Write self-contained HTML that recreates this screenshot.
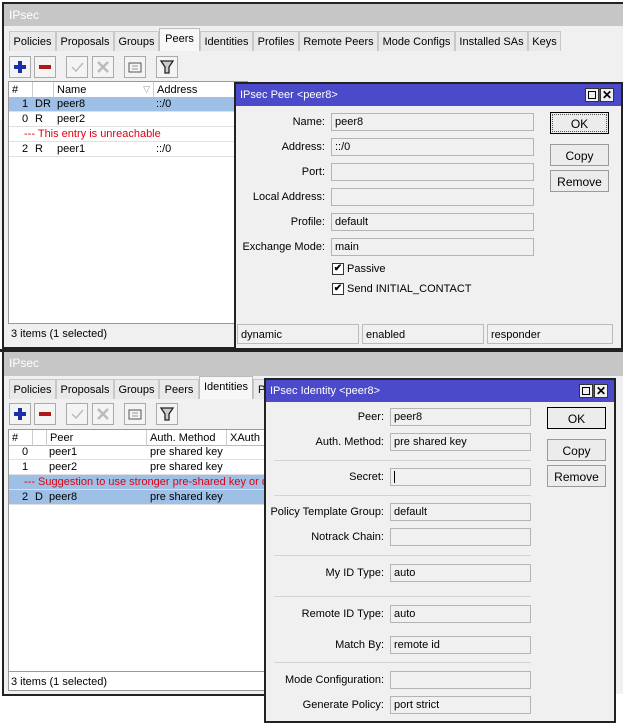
<!DOCTYPE html>
<html><head><meta charset="utf-8"><style>
*{box-sizing:border-box;margin:0;padding:0}
body{width:623px;height:719px;overflow:hidden;background:#fff;position:relative;font-family:"Liberation Sans",sans-serif;font-size:11px;color:#000}
.a{position:absolute}
.win{position:absolute;background:#f0f0f0;border:2px solid #222}
.tb{position:absolute;background:#c6c6c6;color:#fff;font-size:12px;padding:4px 0 0 5px}
.tab{position:absolute;height:20px;background:#e9e9e9;border:1px solid #c8c8c8;border-bottom:none;padding:4px 0 0 0;text-align:center;font-size:11px}
.tab.on{background:#f7f7f7;height:23px;border-color:#bbb}
.btn{position:absolute;width:22px;height:22px;border:1px solid #aaa;background:#f4f4f4}
.tbl{position:absolute;background:#fff;border:1px solid #999}
.hd{position:absolute;height:16px;background:#fff;border-right:1px solid #ccc;border-bottom:1px solid #bbb;padding:2px 3px}
.row{position:absolute;height:15px;border-bottom:1px solid #e0e0e0;white-space:nowrap}
.c{position:absolute;top:1px}
.sel{background:#9ec0e6}
.red{color:#e00010}
.dlg{position:absolute;background:#f0f0f0;border:2px solid #222}
.dt{position:absolute;left:0;right:0;top:0;height:22px;background:#4a4acb;color:#fff;font-size:11px;padding:5px 0 0 4px}
.wb{position:absolute;top:4px;width:14px;height:14px;background:#f0f0f0;border:1px solid #333}
.lb{position:absolute;text-align:right;width:200px}
.in{position:absolute;height:18px;background:#f0f0f0;border:1px solid #b4b4b4;padding:2px 3px}
.bt{position:absolute;width:59px;height:22px;border:1px solid #9a9a9a;background:#ececec;text-align:center;padding-top:4px;font-size:12px}
.sep{position:absolute;height:1px;background:#d4d4d4}
.cb{position:absolute;width:12px;height:12px;border:1px solid #333;background:#fff;font-size:10px;line-height:10px;text-align:center;font-weight:bold}
.st{position:absolute;height:20px;border:1px solid #bbb;padding:4px 3px;background:#f0f0f0}
</style></head><body>

<div class="a" style="left:0;top:120px;width:3px;height:120px;background:#f0f0f0"></div>

<!-- TOP WINDOW -->
<div class="win" style="left:2px;top:2px;width:640px;height:347px"></div>
<div class="tb" style="left:4px;top:4px;width:619px;height:22px">IPsec</div>
<div class="a" style="left:4px;top:26px;width:619px;height:320px;background:#f0f0f0"></div>
<div class="tab" style="left:9px;top:31px;width:47px">Policies</div>
<div class="tab" style="left:56px;top:31px;width:58px">Proposals</div>
<div class="tab" style="left:114px;top:31px;width:45px">Groups</div>
<div class="tab on" style="left:159px;top:28px;width:41px">Peers</div>
<div class="tab" style="left:200px;top:31px;width:53px">Identities</div>
<div class="tab" style="left:253px;top:31px;width:46px">Profiles</div>
<div class="tab" style="left:299px;top:31px;width:79px">Remote Peers</div>
<div class="tab" style="left:378px;top:31px;width:77px">Mode Configs</div>
<div class="tab" style="left:455px;top:31px;width:73px">Installed SAs</div>
<div class="tab" style="left:528px;top:31px;width:33px">Keys</div>

<div class="btn" style="left:9px;top:56px"><svg width="20" height="20"><path d="M10 4v12M4 10h12" stroke="#1a2fa8" stroke-width="4"/></svg></div>
<div class="btn" style="left:34px;top:56px"><svg width="20" height="20"><path d="M4 10h12" stroke="#b01818" stroke-width="4"/></svg></div>
<div class="btn" style="left:66px;top:56px"><svg width="20" height="20"><path d="M5 10l4 4 7-8" stroke="#bbb" fill="none" stroke-width="1.5"/></svg></div>
<div class="btn" style="left:92px;top:56px"><svg width="20" height="20"><path d="M5 5l10 10M15 5L5 15" stroke="#bbb" stroke-width="2.5"/></svg></div>
<div class="btn" style="left:124px;top:56px"><svg width="20" height="20"><rect x="4" y="6" width="12" height="9" fill="none" stroke="#555"/><path d="M7 9h6M7 12h6" stroke="#999"/></svg></div>
<div class="btn" style="left:156px;top:56px"><svg width="20" height="20"><path d="M4 4h12l-4 6v6h-4v-6z" fill="#ccc" stroke="#222" stroke-width="1.3"/></svg></div>

<div class="tbl" style="left:8px;top:81px;width:240px;height:243px"></div>
<div class="hd" style="left:9px;top:82px;width:24px">#</div>
<div class="hd" style="left:33px;top:82px;width:21px"></div>
<div class="hd" style="left:54px;top:82px;width:100px">Name<span style="position:absolute;right:3px;color:#999;font-size:9px">▽</span></div>
<div class="hd" style="left:154px;top:82px;width:100px">Address</div>
<div class="row sel" style="left:9px;top:97px;width:226px"><span class="c" style="left:13px">1</span><span class="c" style="left:26px">DR</span><span class="c" style="left:48px">peer8</span><span class="c" style="left:147px">::/0</span></div>
<div class="row" style="left:9px;top:112px;width:226px"><span class="c" style="left:13px">0</span><span class="c" style="left:26px">R</span><span class="c" style="left:48px">peer2</span></div>
<div class="row red" style="left:9px;top:127px;width:226px"><span class="c" style="left:15px">--- This entry is unreachable</span></div>
<div class="row" style="left:9px;top:142px;width:226px"><span class="c" style="left:13px">2</span><span class="c" style="left:26px">R</span><span class="c" style="left:48px">peer1</span><span class="c" style="left:147px">::/0</span></div>
<div class="a" style="left:8px;top:323px;width:228px;height:20px;border-top:1px solid #999;padding:4px 3px">3 items (1 selected)</div>
<div class="a" style="left:620px;top:322px;width:3px;height:22px;border-left:1px solid #999"></div>

<!-- PEER DIALOG -->
<div class="dlg" style="left:234px;top:82px;width:389px;height:268px">
<div class="dt">IPsec Peer &lt;peer8&gt;</div>
<div class="wb" style="left:349px"><div style="position:absolute;left:2px;top:2px;width:8px;height:8px;border:1px solid #000"></div></div>
<div class="wb" style="left:364px;font-size:12px;line-height:12px;text-align:center;font-weight:bold">✕</div>
</div>
<div class="lb" style="left:125px;top:116px">Name:</div><div class="in" style="left:331px;top:113px;width:203px">peer8</div>
<div class="lb" style="left:125px;top:141px">Address:</div><div class="in" style="left:331px;top:138px;width:203px">::/0</div>
<div class="lb" style="left:125px;top:166px">Port:</div><div class="in" style="left:331px;top:163px;width:203px"></div>
<div class="lb" style="left:125px;top:191px">Local Address:</div><div class="in" style="left:331px;top:188px;width:203px"></div>
<div class="lb" style="left:125px;top:216px">Profile:</div><div class="in" style="left:331px;top:213px;width:203px">default</div>
<div class="lb" style="left:125px;top:241px">Exchange Mode:</div><div class="in" style="left:331px;top:238px;width:203px">main</div>
<div class="cb" style="left:332px;top:263px">✔</div><div class="a" style="left:347px;top:263px">Passive</div>
<div class="cb" style="left:332px;top:283px">✔</div><div class="a" style="left:347px;top:283px">Send INITIAL_CONTACT</div>
<div class="bt" style="left:550px;top:112px;border:1px solid #000;outline:1px dotted #555;outline-offset:-3px">OK</div>
<div class="bt" style="left:550px;top:144px">Copy</div>
<div class="bt" style="left:550px;top:170px">Remove</div>
<div class="st" style="left:237px;top:324px;width:122px">dynamic</div>
<div class="st" style="left:362px;top:324px;width:122px">enabled</div>
<div class="st" style="left:487px;top:324px;width:126px">responder</div>

<!-- BOTTOM WINDOW -->
<div class="a" style="left:0;top:349px;width:623px;height:3px;background:#222"></div>
<div class="tb" style="left:4px;top:352px;width:619px;height:24px">IPsec</div>
<div class="a" style="left:4px;top:376px;width:619px;height:318px;background:#f0f0f0"></div>
<div class="a" style="left:2px;top:352px;width:2px;height:343px;background:#222"></div>
<div class="a" style="left:2px;top:694px;width:262px;height:2px;background:#222"></div>
<div class="tab" style="left:9px;top:379px;width:47px">Policies</div>
<div class="tab" style="left:56px;top:379px;width:58px">Proposals</div>
<div class="tab" style="left:114px;top:379px;width:45px">Groups</div>
<div class="tab" style="left:159px;top:379px;width:40px">Peers</div>
<div class="tab on" style="left:199px;top:376px;width:54px">Identities</div>
<div class="tab" style="left:253px;top:379px;width:30px;text-align:left;padding-left:4px">P</div>

<div class="btn" style="left:9px;top:403px"><svg width="20" height="20"><path d="M10 4v12M4 10h12" stroke="#1a2fa8" stroke-width="4"/></svg></div>
<div class="btn" style="left:34px;top:403px"><svg width="20" height="20"><path d="M4 10h12" stroke="#b01818" stroke-width="4"/></svg></div>
<div class="btn" style="left:66px;top:403px"><svg width="20" height="20"><path d="M5 10l4 4 7-8" stroke="#bbb" fill="none" stroke-width="1.5"/></svg></div>
<div class="btn" style="left:92px;top:403px"><svg width="20" height="20"><path d="M5 5l10 10M15 5L5 15" stroke="#bbb" stroke-width="2.5"/></svg></div>
<div class="btn" style="left:124px;top:403px"><svg width="20" height="20"><rect x="4" y="6" width="12" height="9" fill="none" stroke="#555"/><path d="M7 9h6M7 12h6" stroke="#999"/></svg></div>
<div class="btn" style="left:156px;top:403px"><svg width="20" height="20"><path d="M4 4h12l-4 6v6h-4v-6z" fill="#ccc" stroke="#222" stroke-width="1.3"/></svg></div>

<div class="tbl" style="left:8px;top:429px;width:270px;height:262px"></div>
<div class="hd" style="left:9px;top:430px;width:24px">#</div>
<div class="hd" style="left:33px;top:430px;width:14px"></div>
<div class="hd" style="left:47px;top:430px;width:100px">Peer</div>
<div class="hd" style="left:147px;top:430px;width:80px">Auth. Method</div>
<div class="hd" style="left:227px;top:430px;width:50px">XAuth</div>
<div class="row" style="left:9px;top:445px;width:256px"><span class="c" style="left:13px">0</span><span class="c" style="left:40px">peer1</span><span class="c" style="left:141px">pre shared key</span></div>
<div class="row" style="left:9px;top:460px;width:256px"><span class="c" style="left:13px">1</span><span class="c" style="left:40px">peer2</span><span class="c" style="left:141px">pre shared key</span></div>
<div class="row sel red" style="left:9px;top:475px;width:256px;overflow:hidden"><span class="c" style="left:15px">--- Suggestion to use stronger pre-shared key or different</span></div>
<div class="row sel" style="left:9px;top:490px;width:256px"><span class="c" style="left:13px">2</span><span class="c" style="left:26px">D</span><span class="c" style="left:40px">peer8</span><span class="c" style="left:141px">pre shared key</span></div>
<div class="a" style="left:8px;top:671px;width:256px;height:20px;border-top:1px solid #999;padding:4px 3px">3 items (1 selected)</div>

<!-- IDENTITY DIALOG -->
<div class="dlg" style="left:264px;top:378px;width:352px;height:345px">
<div class="dt">IPsec Identity &lt;peer8&gt;</div>
<div class="wb" style="left:313px"><div style="position:absolute;left:2px;top:2px;width:8px;height:8px;border:1px solid #000"></div></div>
<div class="wb" style="left:328px;font-size:12px;line-height:12px;text-align:center;font-weight:bold">✕</div>
</div>
<div class="lb" style="left:184px;top:411px">Peer:</div><div class="in" style="left:390px;top:408px;width:141px">peer8</div>
<div class="lb" style="left:184px;top:436px">Auth. Method:</div><div class="in" style="left:390px;top:433px;width:141px">pre shared key</div>
<div class="sep" style="left:274px;top:460px;width:257px"></div>
<div class="lb" style="left:184px;top:471px">Secret:</div><div class="in" style="left:390px;top:468px;width:141px"><span style="display:inline-block;width:1px;height:12px;background:#000"></span></div>
<div class="sep" style="left:274px;top:495px;width:257px"></div>
<div class="lb" style="left:184px;top:506px">Policy Template Group:</div><div class="in" style="left:390px;top:503px;width:141px">default</div>
<div class="lb" style="left:184px;top:531px">Notrack Chain:</div><div class="in" style="left:390px;top:528px;width:141px"></div>
<div class="sep" style="left:274px;top:555px;width:257px"></div>
<div class="lb" style="left:184px;top:567px">My ID Type:</div><div class="in" style="left:390px;top:564px;width:141px">auto</div>
<div class="sep" style="left:274px;top:596px;width:257px"></div>
<div class="lb" style="left:184px;top:608px">Remote ID Type:</div><div class="in" style="left:390px;top:605px;width:141px">auto</div>
<div class="lb" style="left:184px;top:639px">Match By:</div><div class="in" style="left:390px;top:636px;width:141px">remote id</div>
<div class="sep" style="left:274px;top:662px;width:257px"></div>
<div class="lb" style="left:184px;top:674px">Mode Configuration:</div><div class="in" style="left:390px;top:671px;width:141px"></div>
<div class="lb" style="left:184px;top:699px">Generate Policy:</div><div class="in" style="left:390px;top:696px;width:141px">port strict</div>
<div class="bt" style="left:547px;top:407px;border:1px solid #000">OK</div>
<div class="bt" style="left:547px;top:439px">Copy</div>
<div class="bt" style="left:547px;top:465px">Remove</div>
</body></html>
